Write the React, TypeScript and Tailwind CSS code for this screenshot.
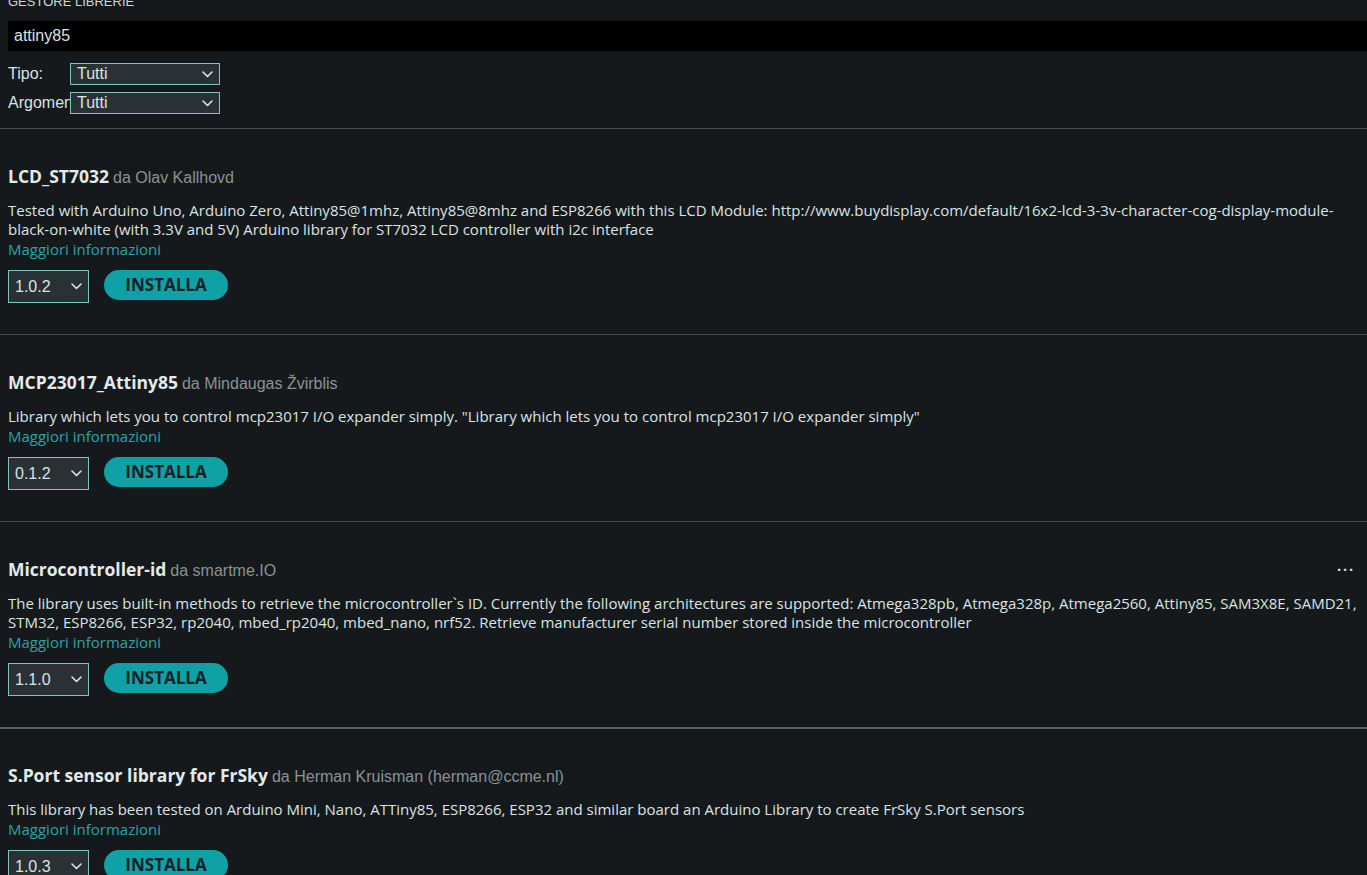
import React from "react";

const libraries = [
  {
    name: "LCD_ST7032",
    author: "Olav Kallhovd",
    description:
      "Tested with Arduino Uno, Arduino Zero, Attiny85@1mhz, Attiny85@8mhz and ESP8266 with this LCD Module: http://www.buydisplay.com/default/16x2-lcd-3-3v-character-cog-display-module-black-on-white (with 3.3V and 5V) Arduino library for ST7032 LCD controller with i2c interface",
    version: "1.0.2",
  },
  {
    name: "MCP23017_Attiny85",
    author: "Mindaugas Žvirblis",
    description:
      'Library which lets you to control mcp23017 I/O expander simply. "Library which lets you to control mcp23017 I/O expander simply"',
    version: "0.1.2",
  },
  {
    name: "Microcontroller-id",
    author: "smartme.IO",
    description:
      "The library uses built-in methods to retrieve the microcontroller`s ID. Currently the following architectures are supported: Atmega328pb, Atmega328p, Atmega2560, Attiny85, SAM3X8E, SAMD21, STM32, ESP8266, ESP32, rp2040, mbed_rp2040, mbed_nano, nrf52. Retrieve manufacturer serial number stored inside the microcontroller",
    version: "1.1.0",
    hovered: true,
  },
  {
    name: "S.Port sensor library for FrSky",
    author: "Herman Kruisman (herman@ccme.nl)",
    description:
      "This library has been tested on Arduino Mini, Nano, ATTiny85, ESP8266, ESP32 and similar board an Arduino Library to create FrSky S.Port sensors",
    version: "1.0.3",
    strongBorder: true,
  },
];

const Chevron = () => (
  <svg width="11" height="7" viewBox="0 0 11 7" fill="none">
    <path
      d="M1 1l4.5 4.5L10 1"
      stroke="#dae3e3"
      strokeWidth="1.6"
      strokeLinecap="round"
      strokeLinejoin="round"
    />
  </svg>
);

const FilterSelect = ({ label }: { label: string }) => (
  <div className="flex h-[22px] items-center">
    <span className="w-[62px] shrink-0 overflow-hidden whitespace-nowrap">
      {label}
    </span>
    <div className="flex h-[22px] w-[150px] items-center justify-between border border-[#7cc4c6] bg-[#2a3135] pl-[6px] pr-[6px] text-[#dae3e3]">
      <span>Tutti</span>
      <Chevron />
    </div>
  </div>
);

const LibraryItem = ({ lib }: { lib: (typeof libraries)[number] }) => (
  <div
    className={
      lib.strongBorder
        ? "border-t-2 border-[#5b6367] pb-[31px] pl-2 pr-[4px] pt-[34px]"
        : "border-t border-[#464d50] pb-[31px] pl-2 pr-[4px] pt-[35px]"
    }
  >
    <div className="mr-[8px] flex h-[24px] items-center justify-between">
      <div className="whitespace-nowrap">
        <span className="font-['Open_Sans',sans-serif] text-[17.5px] font-bold text-[#e3eaea]">
          {lib.name}
        </span>
        <span className="ml-[4px] font-['Liberation_Sans',Arial,sans-serif] text-[16px] text-[#8b9295]">
          da {lib.author}
        </span>
      </div>
      {lib.hovered && (
        <span className="font-['Liberation_Sans',Arial,sans-serif] text-[15px] font-bold leading-none tracking-[1px] text-[#dae3e3]">
          ···
        </span>
      )}
    </div>
    <p className="mt-[13px] font-['Open_Sans',sans-serif] text-[15px] leading-[19px] text-[#dae3e3]">
      {lib.description}
    </p>
    <a className="block font-['Open_Sans',sans-serif] text-[15px] leading-[20px] text-[#2aa3a6]">
      Maggiori informazioni
    </a>
    <div className="mt-[11px] flex items-start gap-[15px]">
      <div className="flex h-[33px] w-[81px] items-center justify-between border border-[#7cc4c6] bg-[#2a3135] pl-[6px] pr-[6px] font-['Liberation_Sans',Arial,sans-serif] text-[16px] text-[#dae3e3]">
        <span>{lib.version}</span>
        <Chevron />
      </div>
      <button className="flex h-[30px] w-[124px] items-center justify-center rounded-full bg-[#0fa1a6] font-['Open_Sans',sans-serif] text-[17px] font-bold text-[#162024]">
        INSTALLA
      </button>
    </div>
  </div>
);

export default function App() {
  return (
    <div className="h-[875px] w-full overflow-hidden bg-[#15191c] font-['Liberation_Sans',Arial,sans-serif] text-[#dae3e3]">
      <div className="pb-[14px]">
        <div className="-mt-[6px] pl-2 text-[13px] leading-[15px] uppercase text-[#cdd5d6]">
          Gestore librerie
        </div>
        <div className="ml-2 mt-[12px] flex h-[30px] items-center bg-black pl-[6px] text-[16px] text-[#dae3e3]">
          attiny85
        </div>
        <div className="mt-[12px] flex flex-col gap-[7px] pl-2 text-[16px]">
          <FilterSelect label="Tipo:" />
          <FilterSelect label="Argomento:" />
        </div>
      </div>
      {libraries.map((lib) => (
        <LibraryItem key={lib.name} lib={lib} />
      ))}
    </div>
  );
}
